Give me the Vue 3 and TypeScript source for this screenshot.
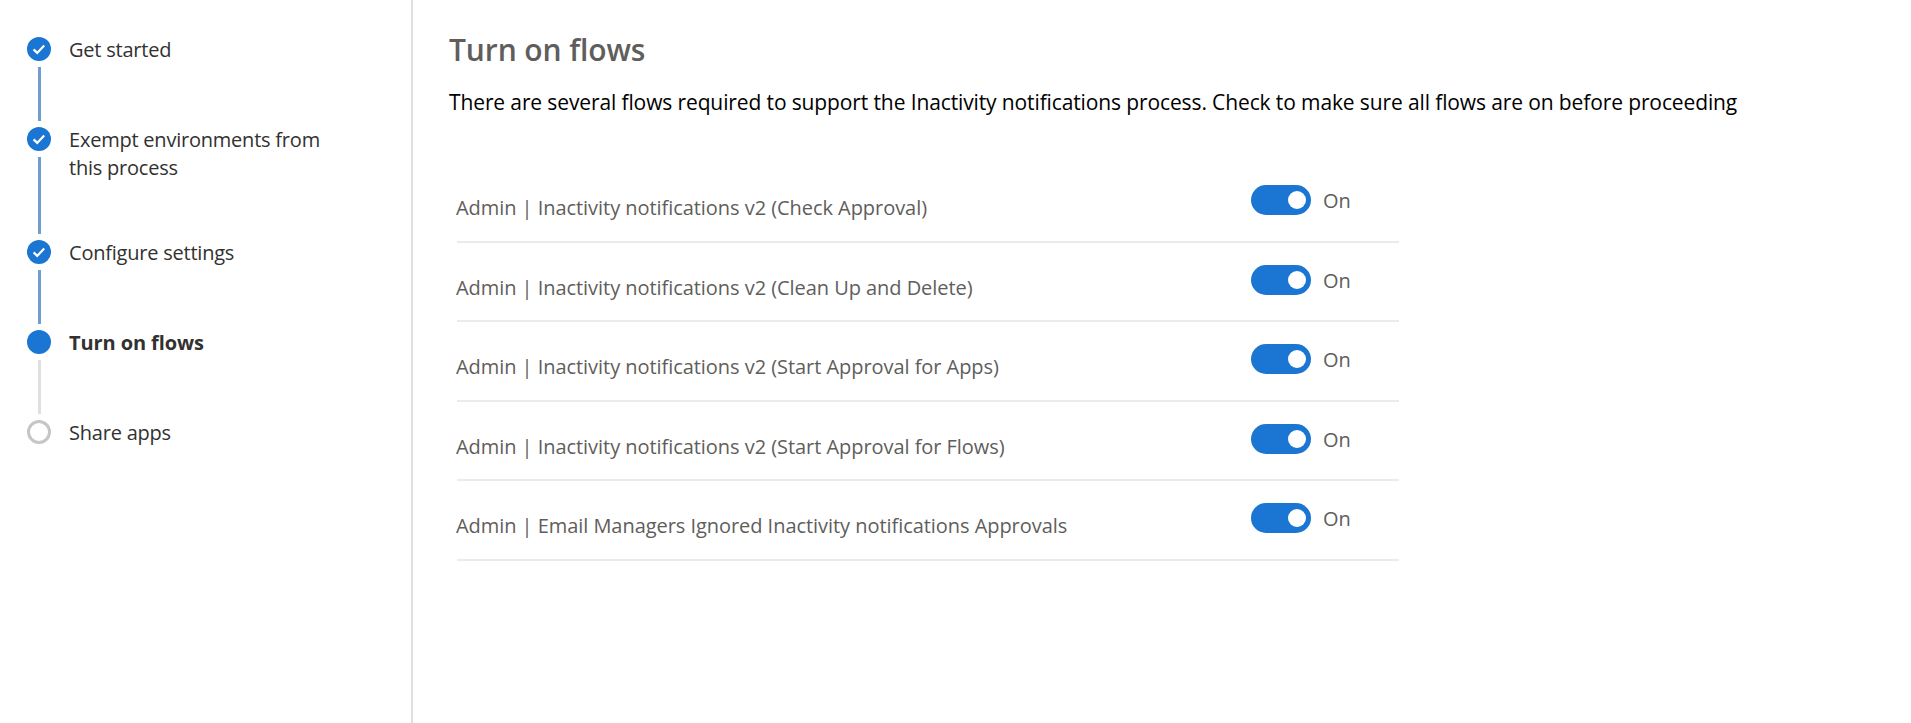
<template>
  <div class="wizard">
    <aside class="steps">
      <div v-for="(step, i) in steps" :key="step.label" class="step" :class="step.state">
        <div class="rail">
          <span class="dot">
            <svg v-if="step.state === 'done'" width="16" height="16" viewBox="0 0 16 16">
              <path d="M2.6 8.4 6.2 11.9 13.2 4.6" fill="none" stroke="#fff" stroke-width="2.2" />
            </svg>
          </span>
          <span v-if="i < steps.length - 1" class="line" :class="{ wide: step.tall }"></span>
        </div>
        <div class="label">{{ step.label }}</div>
      </div>
    </aside>

    <main class="content">
      <h1>Turn on flows</h1>
      <p class="intro">
        There are several flows required to support the Inactivity notifications process. Check to make sure all flows are on before proceeding
      </p>
      <div class="flows">
        <div v-for="flow in flows" :key="flow" class="flow">
          <span class="name">{{ flow }}</span>
          <div class="toggle-wrap">
            <span class="toggle"><span class="knob"></span></span>
            <span class="on">On</span>
          </div>
        </div>
      </div>
    </main>
  </div>
</template>

<script setup lang="ts">
type Step = { label: string; state: 'done' | 'current' | 'todo'; tall?: boolean }

const steps: Step[] = [
  { label: 'Get started', state: 'done' },
  { label: 'Exempt environments from this process', state: 'done', tall: true },
  { label: 'Configure settings', state: 'done' },
  { label: 'Turn on flows', state: 'current' },
  { label: 'Share apps', state: 'todo' },
]

const flows = [
  'Admin | Inactivity notifications v2 (Check Approval)',
  'Admin | Inactivity notifications v2 (Clean Up and Delete)',
  'Admin | Inactivity notifications v2 (Start Approval for Apps)',
  'Admin | Inactivity notifications v2 (Start Approval for Flows)',
  'Admin | Email Managers Ignored Inactivity notifications Approvals',
]
</script>

<style scoped>
.wizard { display: flex; height: 723px; background: #fff; font-family: 'Open Sans', 'Noto Sans', sans-serif; overflow: hidden; }

.steps { width: 413px; box-sizing: border-box; padding: 37px 0 0 27px; border-right: 2px solid #e1dfdd; flex-shrink: 0; }
.step { display: flex; }
.rail { width: 24px; display: flex; flex-direction: column; align-items: center; }
.dot { width: 24px; height: 24px; border-radius: 50%; box-sizing: border-box; background: #1a76d2; display: flex; align-items: center; justify-content: center; flex-shrink: 0; }
.todo .dot { background: #fff; border: 3px solid #c8c6c4; }
.line { width: 3px; height: 54px; margin: 6px 0; background: #6f9fcf; }
.line.wide { height: 77px; }
.current .line { background: #e1dfdd; }
.label { margin: -1px 0 0 18px; width: 270px; font-size: 20px; line-height: 28px; color: #323130; letter-spacing: -0.22px; }
.current .label { font-weight: 700; letter-spacing: -0.1px; }

.content { padding: 30px 0 0 36px; flex: 1; }
h1 { margin: 0; font-size: 30px; line-height: 40px; font-weight: 600; color: #605e5c; letter-spacing: -0.1px; }
.intro { margin: 17px 0 0; font-size: 21px; line-height: 30px; color: #000; letter-spacing: -0.12px; white-space: nowrap; }
.flows { margin: 46px 0 0 8px; width: 942px; }
.flow { height: 79.6px; box-sizing: border-box; border-bottom: 2px solid #edebe9; display: flex; align-items: flex-start; }
.name { width: 795px; margin-left: -1px; padding-top: 31px; font-size: 20px; line-height: 28px; color: #605e5c; letter-spacing: -0.05px; white-space: nowrap; }
.toggle-wrap { display: flex; align-items: center; padding-top: 22px; }
.toggle { width: 60px; height: 30px; border-radius: 15px; background: #1a76d2; display: flex; align-items: center; justify-content: flex-end; padding-right: 5px; box-sizing: border-box; }
.knob { width: 18px; height: 18px; border-radius: 50%; background: #fff; }
.on { margin: 2px 0 0 12px; font-size: 20px; line-height: 28px; color: #605e5c; }
</style>
